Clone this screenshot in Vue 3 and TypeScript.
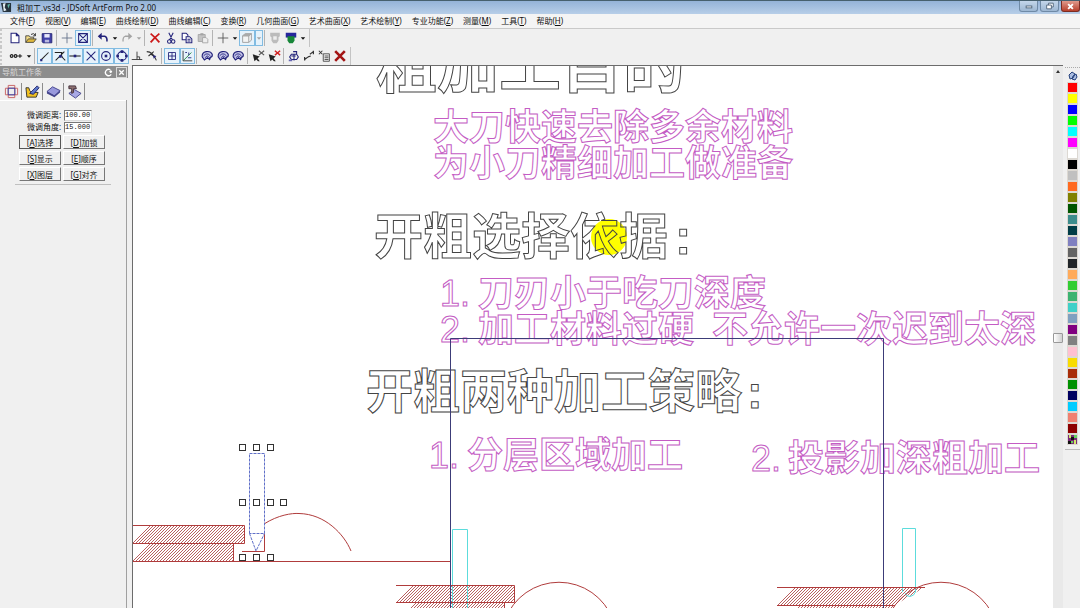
<script setup lang="ts">
interface Shape { d: string; s?: string; f?: string; w?: number }
interface Tool { icon: string; label: string; on?: boolean; narrow?: boolean }
interface Group { width: number; tools: Tool[] }
interface Row { name: string; groups: Group[] }

const navy = '#23237a'
const grey = '#a4a4a4'
const blob: Shape[] = [
  { d: 'M2.500 9 Q2 4 7 3 Q12 2 14 6 Q14.500 9 12 9.500 L11 12 L8.500 10 L5 12.500 Z', f: '#c6c6ea', s: navy, w: 1.300 },
  { d: 'M4 8 Q8 3 12 8 M6 10 Q8 6 11 10', s: navy },
]

const icons: Record<string, Shape[]> = {
  new: [{ d: 'M3.500 2.500 H9.500 L12.500 5.500 V13.500 H3.500 Z M9.500 2.500 V5.500 H12.500', f: '#fff', s: navy, w: 1.200 }],
  open: [
    { d: 'M2 13 V5.500 H6 L7 7 H11 V9', f: '#f3dc86', s: '#444' },
    { d: 'M2 13 L5 9 H14 L11 13 Z', f: '#e0b93c', s: '#444' },
    { d: 'M8 4 Q11 1.500 13 5 M13 2.500 V5.500 H10.500', s: '#222' },
  ],
  save: [
    { d: 'M2.500 3 H13.500 V13.500 H3.500 L2.500 12.500 Z', f: '#4040a8', s: '#202070' },
    { d: 'M5 3.500 H11 V7.500 H5 Z', f: '#e8e8fa' },
    { d: 'M5.500 10 H10.500 V13 H5.500 Z', f: '#b9b9e0' },
  ],
  cross: [{ d: 'M8 2 V14 M2 8 H14', s: '#62718a' }],
  fit: [{ d: 'M3 3 H13 V13 H3 Z M3 3 L13 13 M13 3 L3 13', s: navy, w: 1.200 }],
  undo: [{ d: 'M4 6 H10 Q13 7 12.500 12', s: navy, w: 1.800 }, { d: 'M2 6 L6.500 2 V10 Z', f: navy }],
  redo: [{ d: 'M12 6 H6 Q3 7 3.500 12', s: grey, w: 1.500 }, { d: 'M14 6 L9.500 2 V10 Z', f: grey }],
  arrow: [{ d: 'M5.500 7 H10.500 L8 10 Z', f: '#111' }],
  arrowOff: [{ d: 'M5.500 7 H10.500 L8 10 Z', f: grey }],
  remove: [{ d: 'M3 3 Q8 7 13 13 M13 3 Q8 7 3 13', s: '#cc1818', w: 2 }],
  cut: [{ d: 'M5.500 2 L9.500 10 M10.500 2 L6.500 10 M4 12 A2 2 0 1 0 8 12 A2 2 0 1 0 4 12 M8.500 12 A2 2 0 1 0 12.500 12 A2 2 0 1 0 8.500 12', s: navy, w: 1.200 }],
  copy: [
    { d: 'M2.500 2.500 H7 L9 4.500 V10 H2.500 Z', f: '#fff', s: navy, w: 1.200 },
    { d: 'M7 6.500 H11 L13.500 9 V13.500 H7 Z M8.500 9.500 H12 M8.500 11.500 H12', f: '#fff', s: navy, w: 1.200 },
  ],
  paste: [
    { d: 'M2.500 4 H10.500 V12 H2.500 Z', f: '#c3c3c3', s: grey },
    { d: 'M5 2.500 H8.500 V5 H5 Z', f: grey },
    { d: 'M7.500 7.500 H11.500 L13.500 9.500 V13.500 H7.500 Z', f: '#eee', s: grey },
  ],
  plus: [{ d: 'M8 2 V14 M2 8 H14', s: '#555' }],
  cube: [{ d: 'M3 5.500 H10 V13 H3 Z M3 5.500 L6 3 H13 V10.500 L10 13 M10 5.500 L13 3', s: '#9a9a9a', f: '#f4f4f4' }, { d: 'M3 5 L6 3 H13 L10.500 6 H3 Z', f: '#aaa' }],
  bulbOff: [{ d: 'M2.500 2 H13.500 V6 L12 7 V11 L10 14 H6 L4 11 V7 L2.500 6 Z', f: '#bcbcbc' }, { d: 'M6 6 H10 V10 H6 Z', f: '#eee' }],
  bulb: [{ d: 'M2 2 H14 V7.500 H2 Z', f: '#26269c' }, { d: 'M4 6 H12 V11 L10 14 H6 L4 11 Z', f: '#178638' }],
  nodes: [{ d: 'M1.500 8 A1.500 1.500 0 1 0 4.500 8 A1.500 1.500 0 1 0 1.500 8 M6 8 A1.500 1.500 0 1 0 9 8 A1.500 1.500 0 1 0 6 8 M9 8 H15 M12.500 6 V10', s: '#222', w: 1.400 }],
  line: [{ d: 'M3.500 12.500 L12 4', s: '#222', w: 1.200 }, { d: 'M2.500 11.500 H5 V14 H2.500 Z', f: navy }],
  tangent: [{ d: 'M2 4 H10 Q8 8 14 13 M3 13 L13 3', s: '#222', w: 1.200 }, { d: 'M7 7 H10 V10 H7 Z', f: navy }],
  mid: [{ d: 'M1.500 8 H14.500', s: '#222', w: 1.200 }, { d: 'M6.500 6.500 H9.500 V9.500 H6.500 Z', f: navy }],
  inter: [{ d: 'M3 3 L13 13 M13 3 L3 13', s: navy, w: 1.200 }],
  centre: [{ d: 'M3 8 A5 5 0 1 0 13 8 A5 5 0 1 0 3 8', s: navy, w: 1.200 }, { d: 'M6.500 6.500 H9.500 V9.500 H6.500 Z', f: navy }],
  quad: [{ d: 'M3 8 A5 5 0 1 0 13 8 A5 5 0 1 0 3 8', s: navy, w: 1.200 }, { d: 'M6.500 1.500 H9.500 V4.500 H6.500 Z M6.500 11.500 H9.500 V14.500 H6.500 Z M1.500 6.500 H4.500 V9.500 H1.500 Z M11.500 6.500 H14.500 V9.500 H11.500 Z', f: navy }],
  perp: [{ d: 'M8 3 V12 M2 12 H14 M8 9 H11 V12', s: '#333' }],
  curve: [{ d: 'M2 3 Q9 3 13 13 M4 8 L10 3 M7 6 L11 9', s: '#333', w: 1.200 }, { d: 'M9 7 L13 8 L10 11 Z', f: navy }],
  target: [{ d: 'M4 4 H12 V12 H4 Z M8 4 V12 M4 8 H12', s: navy }],
  axes: [{ d: 'M3.500 2 V13.500 H14', s: '#333' }, { d: 'M4 13 L13 4', s: '#1b7f3b' }, { d: 'M6 4 H8 M10 4 V7 M9 10 H13', s: navy }],
  fillA: blob,
  fillB: blob,
  fillC: blob,
  pickA: [{ d: 'M2 6 L10 8.500 L7.500 10.500 L10 14 L8 14 L6 12 L4 14 Z', f: '#222' }, { d: 'M9 2 L15 7 M15 2 L9 7', s: '#555', w: 1.200 }],
  pickB: [{ d: 'M2 6 L10 8.500 L7.500 10.500 L10 14 L8 14 L6 12 L4 14 Z', f: '#222' }, { d: 'M9 2 L15 7 M15 2 L9 7', s: '#d02020', w: 1.600 }],
  group: [{ d: 'M5 6 H11 L13 9 L11 12 H5 L3 9 Z M7 3 H11 V6 M5 8 H10 M8 6 V13', s: navy, w: 1.200 }, { d: 'M2 12 H6 V14 H2 Z', f: '#6868b4' }],
  link: [{ d: 'M3 12 L7 9 M9 6 L13 3 M3 9 V13 M13 2 V6 M7 9 L10 8', s: '#333', w: 1.400 }],
  list: [{ d: 'M6 5.500 H13 V14 H6 Z M7.500 8 H12 M7.500 10 H12 M7.500 12 H12', s: '#444' }, { d: 'M1 2 L5 6 M5 2 L1 6', s: '#333', w: 1.200 }],
  close: [{ d: 'M2.500 2.500 L13.500 13.500 M13.500 2.500 L2.500 13.500', s: '#a31515', w: 3 }],
}

const rows: Row[] = [
  {
    name: '标准',
    groups: [
      { width: 48, tools: [{ icon: 'new', label: '新建' }, { icon: 'open', label: '打开' }, { icon: 'save', label: '保存' }] },
      { width: 32, tools: [{ icon: 'cross', label: '定位' }, { icon: 'fit', label: '全部显示', on: true }] },
      { width: 48, tools: [{ icon: 'undo', label: '撤销' }, { icon: 'arrow', label: '撤销列表', narrow: true }, { icon: 'redo', label: '重做' }, { icon: 'arrowOff', label: '重做列表', narrow: true }] },
      { width: 64, tools: [{ icon: 'remove', label: '删除' }, { icon: 'cut', label: '剪切' }, { icon: 'copy', label: '复制' }, { icon: 'paste', label: '粘贴' }] },
      { width: 48, tools: [{ icon: 'plus', label: '坐标' }, { icon: 'arrow', label: '坐标列表', narrow: true }, { icon: 'cube', label: '视图', on: true }, { icon: 'arrowOff', label: '视图列表', narrow: true, on: true }] },
      { width: 40, tools: [{ icon: 'bulbOff', label: '渲染' }, { icon: 'bulb', label: '着色' }, { icon: 'arrow', label: '更多', narrow: true }] },
    ],
  },
  {
    name: '捕捉',
    groups: [
      { width: 26, tools: [{ icon: 'nodes', label: '节点' }, { icon: 'arrow', label: '节点列表', narrow: true }] },
      { width: 123, tools: [
        { icon: 'line', label: '端点', on: true }, { icon: 'tangent', label: '切点', on: true }, { icon: 'mid', label: '中点', on: true }, { icon: 'inter', label: '交点', on: true },
        { icon: 'centre', label: '圆心', on: true }, { icon: 'quad', label: '象限点', on: true }, { icon: 'perp', label: '垂足' }, { icon: 'curve', label: '最近点' },
      ] },
      { width: 31, tools: [{ icon: 'target', label: '栅格', on: true }, { icon: 'axes', label: '坐标轴', on: true }] },
      { width: 47, tools: [{ icon: 'fillA', label: '曲面一' }, { icon: 'fillB', label: '曲面二' }, { icon: 'fillC', label: '曲面三' }] },
      { width: 32, tools: [{ icon: 'pickA', label: '拾取' }, { icon: 'pickB', label: '取消拾取' }] },
      { width: 62, tools: [{ icon: 'group', label: '组合' }, { icon: 'link', label: '连接' }, { icon: 'list', label: '属性' }, { icon: 'close', label: '关闭' }] },
    ],
  },
]

const menus: [string, string][] = [
  ['文件', 'F'], ['视图', 'V'], ['编辑', 'E'], ['曲线绘制', 'D'], ['曲线编辑', 'C'], ['变换', 'R'], ['几何曲面', 'G'],
  ['艺术曲面', 'X'], ['艺术绘制', 'Y'], ['专业功能', 'Z'], ['测量', 'M'], ['工具', 'T'], ['帮助', 'H'],
]

const commands: [string, string][] = [['A', '选择'], ['D', '加锁'], ['S', '显示'], ['E', '顺序'], ['X', '图层'], ['G', '对齐']]

const swatches = [
  '#ff0000', '#ffff00', '#0000ff', '#00ff00', '#00ffff', '#ff00ff', '#ffffff', '#000000', '#c0c0c0', '#ff6a20', '#808000',
  '#005500', '#3c8c8c', '#003c46', '#8080c0', '#646464', '#202428', '#ffaa5a', '#32cd32', '#3cb371', '#40d0c8', '#7fa0c0',
  '#800080', '#808080', '#ffc0d0', '#f8dc00', '#a82c08', '#009000', '#000060', '#00ccff', '#f08070', '#8c0000',
]

function hatch(left: number, right: number, top: number, bottom: number): string {
  const run = bottom - top
  let d = ''
  for (let x = left; x < right; x += 3) {
    const over = Math.max(0, x + run - right)
    d += `M${x} ${bottom}L${x + run - over} ${top + over}`
  }
  return d
}

const handles: [number, number][] = [
  [242, 447], [256, 447], [270, 447],
  [242, 502], [256, 502], [270, 502], [283, 502],
  [242, 557], [256, 557], [270, 557],
]
</script>

<template>
  <div class="app">
    <header class="titlebar">
      <svg class="logo" viewBox="0 0 12 12" aria-hidden="true">
        <path d="M0 1H11V11H2Z" fill="#26333d" />
        <path d="M2 2L5 1L4 6L6 9L3 10Z" fill="#e4eef2" />
        <path d="M7 3L10 2L8 7Z" fill="#5fb6a6" />
      </svg>
      <h1>粗加工.vs3d - JDSoft ArtForm Pro 2.00</h1>
      <div class="window-buttons">
        <button type="button" aria-label="最小化"><svg viewBox="0 0 18 10"><rect x="6.500" y="5" width="6" height="2" fill="#fff" stroke="#55697e" /></svg></button>
        <button type="button" aria-label="还原"><svg viewBox="0 0 18 10"><path d="M8 2H13V6H8Z" fill="#fff" stroke="#55697e" /><path d="M6 4H11V8H6Z" fill="#fff" stroke="#55697e" /></svg></button>
        <button type="button" class="quit" aria-label="关闭窗口"><svg viewBox="0 0 18 10"><path d="M6.500 3L11.500 8M11.500 3L6.500 8" stroke="#fff" stroke-width="2" /></svg></button>
      </div>
    </header>

    <nav class="menubar">
      <button v-for="[name, key] in menus" :key="name" type="button">{{ name }}(<u>{{ key }}</u>)</button>
    </nav>

    <div class="toolbars">
      <div v-for="row in rows" :key="row.name" class="toolbar" role="toolbar" :aria-label="row.name">
        <div v-for="(group, i) in row.groups" :key="i" class="group" :style="{ width: group.width + 'px' }">
          <button v-for="tool in group.tools" :key="tool.label" type="button" :class="{ on: tool.on, narrow: tool.narrow }" :aria-label="tool.label">
            <svg viewBox="0 0 16 16">
              <path v-for="(p, k) in icons[tool.icon]" :key="k" :d="p.d" :fill="p.f ?? 'none'" :stroke="p.s ?? 'none'" :stroke-width="p.w ?? 1" />
            </svg>
          </button>
        </div>
      </div>
    </div>

    <div class="work">
      <aside class="panel">
        <div class="panel-title">
          <h2>导航工作条</h2>
          <button type="button" aria-label="固定"><svg viewBox="0 0 10 10"><path d="M7 2A3.500 3.500 0 1 0 8 7M6 4H9M7.500 2.500V5.500" fill="none" stroke="#fff" stroke-width="1.500" /></svg></button>
          <button type="button" class="boxed" aria-label="关闭面板"><svg viewBox="0 0 10 10"><path d="M2.500 2.500L7.500 7.500M7.500 2.500L2.500 7.500" stroke="#fff" stroke-width="1.500" /></svg></button>
        </div>
        <div class="tabs">
          <button type="button" aria-label="选择"><svg viewBox="0 0 16 16"><path d="M4.500 1.500H11.500V14.500H4.500Z" fill="none" stroke="#c86060" /><path d="M1.500 4.500H14.500V11.500H1.500Z" fill="none" stroke="#c86060" /><path d="M4.500 4.500H11.500V11.500H4.500Z" fill="#eee" stroke="#2a2a90" /></svg></button>
          <button type="button" aria-label="绘制"><svg viewBox="0 0 16 16"><path d="M1 4H4L5 7L7 9H14L12 14H2Z" fill="#f0c020" stroke="#333" /><path d="M5 10L13 2L15 4L9 11Z" fill="#5c78cc" stroke="#222266" /></svg></button>
          <button type="button" aria-label="曲面"><svg viewBox="0 0 16 16"><path d="M1 8L7 3L15 7L9 13Z" fill="#9898dc" stroke="#44448c" /><path d="M1 8L9 12L15 7V9L9 14L1 10Z" fill="#44448c" /></svg></button>
          <button type="button" aria-label="加工"><svg viewBox="0 0 16 16"><path d="M2 10L8 6L15 10L9 15Z" fill="#a8a8e4" stroke="#44448c" /><path d="M2 2H9L10 5H7V9L5 10V5H2Z" fill="#8c7070" stroke="#44303c" /></svg></button>
        </div>
        <div class="panel-body">
          <form @submit.prevent>
            <div class="field"><label for="step">微调距离:</label><input id="step" type="text" value="100.00" /></div>
            <div class="field"><label for="angle">微调角度:</label><input id="angle" type="text" value="15.000" /></div>
            <div class="commands">
              <button v-for="[key, name] in commands" :key="key" type="button">[<u>{{ key }}</u>]{{ name }}</button>
            </div>
          </form>
        </div>
      </aside>

      <main class="canvas">
        <svg role="img" aria-label="绘图区">
          <defs>
            <clipPath id="slope">
              <path d="M770 580H935L925 587L895 605L880 620H770Z" />
            </clipPath>
          </defs>
          <g transform="translate(-133 -66)">
            <circle cx="609" cy="237" r="18" fill="#ffff00" />

            <g class="ink">
              <text class="xl" x="375" y="88">粗加工目的</text>
              <text class="lg" x="374" y="254">开粗选择依据<tspan x="675">:</tspan></text>
              <text class="md" x="366" y="408">开粗两种加工策略<tspan x="747">:</tspan></text>
            </g>
            <g class="note">
              <text x="433" y="140">大刀快速去除多余材料</text>
              <text x="433" y="176">为小刀精细加工做准备</text>
              <text x="440" y="306"><tspan class="num">1.</tspan><tspan x="478">刀刃小于吃刀深度</tspan></text>
              <text x="440" y="342"><tspan class="num">2.</tspan><tspan x="478">加工材料过硬</tspan><tspan x="712">不允许一次迟到太深</tspan></text>
              <text x="429" y="468"><tspan class="num">1.</tspan><tspan x="467">分层区域加工</tspan></text>
              <text x="751" y="471"><tspan class="num">2.</tspan><tspan x="788">投影加深粗加工</tspan></text>
            </g>

            <g class="hatch">
              <path :d="hatch(133, 244, 525, 543)" />
              <path :d="hatch(133, 233, 543, 561)" />
              <path :d="hatch(397, 515, 585, 602)" />
              <path :d="hatch(400, 504, 602, 619)" />
              <g clip-path="url(#slope)">
                <path :d="hatch(778, 925, 587, 605)" />
                <path :d="hatch(783, 895, 605, 623)" />
              </g>
            </g>

            <g class="cyan">
              <path d="M452.500 620V529.500H467.500V620" />
              <path d="M902.500 592V528.500H915.500V592Q914 596 910 596.500Q906 596.500 905 593" />
            </g>

            <g class="red">
              <path d="M132 525.500H244.500V543.500H132M233.500 543.500V561.500M132 561.500H450" />
              <path d="M242 551.500H264.500V533.500M264 524C278 515 292 513 299 513.500C325 514 344 534 351 551" />
              <path d="M396 585.500H514.500V602.500H396M504.500 602.500V620" />
              <path d="M505 620A57.500 57.500 0 0 1 613 620" />
              <path d="M777 587.500H925M777 605.500H895M887 620A57.500 57.500 0 0 1 995 620" />
            </g>

            <path class="frame" d="M450.500 620V338.500H883.500V620" />

            <path class="pen" d="M249.500 533.500V453.500H264.500V533.500ZL256 551L264.500 533.500" />
            <rect v-for="[x, y] in handles" :key="x + '-' + y" class="handle" :x="x - 3 + 0.5" :y="y - 3 + 0.5" width="6" height="6" />
          </g>
        </svg>
      </main>

      <div class="scroll" aria-hidden="true">
        <span class="up"></span>
        <span class="thumb"></span>
      </div>

      <aside class="palette">
        <div class="palette-list">
          <button type="button" class="pick" aria-label="取色">
            <svg viewBox="0 0 10 10"><path d="M1 4L4 1L7 3L5 7L2 8ZM5 5L8 3L9 6L7 9L4 8Z" fill="#a9bce0" stroke="#24407c" /></svg>
          </button>
          <button v-for="c in swatches" :key="c" type="button" class="swatch" :style="{ background: c }" :aria-label="c"></button>
          <button type="button" class="swatch" aria-label="更多颜色">
            <svg viewBox="0 0 9 9"><rect width="9" height="9" fill="#7a2a7a" /><path d="M1 0H3V3H1ZM6 5H8V9H6Z" fill="#cfe86c" /><path d="M3 2H6V5H3ZM0 6H3V9H0Z" fill="#111" /><path d="M6 0H9V3H6ZM3 6H5V8H3Z" fill="#66d060" /></svg>
          </button>
        </div>
      </aside>
    </div>
  </div>
</template>

<style>
html,
body {
  margin: 0;
  overflow: hidden;
}
</style>

<style scoped>
.app {
  display: flex;
  flex-direction: column;
  height: 100vh;
  background: #f0f0f0;
  color: #111;
  font: 8px/12px "Noto Sans", "Noto Sans CJK SC", sans-serif;
}
button {
  margin: 0;
  padding: 0;
  border: 0;
  background: none;
  color: inherit;
  font: inherit;
}
h1,
h2 {
  margin: 0;
  font: inherit;
}
svg {
  display: block;
}
.titlebar {
  display: flex;
  align-items: center;
  height: 13px;
  border-top: 1px solid #46606e;
  background: linear-gradient(#94b3d8, #b7cee8);
}
.logo {
  width: 11px;
  height: 11px;
  margin: 0 5px 0 1px;
}
.titlebar h1 {
  flex: 1;
}
.window-buttons {
  display: flex;
  gap: 2px;
  align-self: flex-start;
}
.window-buttons button {
  width: 19px;
  height: 11px;
  border: 1px solid #6f8aa6;
  border-top: 0;
  border-radius: 0 0 3px 3px;
  background: linear-gradient(#c3d6ea, #9db7d2);
}
.window-buttons svg {
  width: 100%;
  height: 10px;
}
.window-buttons .quit {
  border-color: #7c2c22;
  background: linear-gradient(#e09a8c, #b8402c);
}
.menubar {
  display: flex;
  gap: 10px;
  padding: 0 10px;
  height: 14px;
  background: #f4f4f4;
  border-bottom: 1px solid #c9c9c9;
}
.toolbars {
  display: flex;
  flex-direction: column;
  align-items: flex-start;
  height: 36px;
}
.toolbar {
  display: flex;
  height: 18px;
  padding: 1px 1px 1px 5px;
  box-sizing: border-box;
  border-right: 1px solid #c4c4c4;
  border-left: 2px dotted #c8c8c8;
}
.group {
  display: flex;
  margin-left: 2px;
  padding-right: 1px;
  border-right: 1px solid #b4b4b4;
}
.group:first-child {
  margin-left: 0;
}
.group:last-child {
  border-right: 0;
}
.group button {
  flex: 2;
  min-width: 0;
  display: flex;
  align-items: center;
  justify-content: center;
  overflow: hidden;
}
.group button.narrow {
  flex: 1;
}
.group button.on {
  box-shadow: inset 0 0 0 1px #82bce2;
  background: #e6f2fb;
}
.group svg {
  flex: none;
  width: 14px;
  height: 14px;
}
.work {
  flex: 1;
  min-height: 0;
  display: flex;
}
.panel {
  width: 132px;
  box-sizing: border-box;
  padding-right: 4px;
  display: flex;
  flex-direction: column;
}
.panel-title {
  display: flex;
  align-items: center;
  gap: 3px;
  height: 12px;
  margin-top: 1px;
  padding: 0 1px 0 2px;
  background: #8d8d8d;
  color: #d8d8d8;
}
.panel-title h2 {
  flex: 1;
}
.panel-title svg {
  width: 9px;
  height: 9px;
}
.panel-title .boxed {
  border: 1px solid #d8d8d8;
}
.tabs {
  display: flex;
  margin-top: 5px;
  padding-left: 1px;
}
.tabs button {
  width: 21px;
  height: 17px;
  display: flex;
  align-items: center;
  justify-content: center;
  border-right: 1px solid #8c8c8c;
}
.tabs svg {
  width: 15px;
  height: 15px;
}
.panel-body {
  flex: 1;
  border: solid #a0a0a0;
  border-width: 0 1px 0 0;
  box-shadow: inset 0 1px #fff;
  margin-right: 1px;
  padding: 9px 15px 0;
}
.panel form {
  padding-bottom: 3px;
  border-bottom: 1px solid #c0c0c0;
}
.field {
  display: flex;
  align-items: center;
  gap: 3px;
  height: 12px;
  padding-left: 12px;
}
.field label {
  width: 34px;
  white-space: nowrap;
}
.field input {
  width: 28px;
  height: 11px;
  box-sizing: border-box;
  padding: 0;
  border: 1px solid #777;
  border-right-color: #ddd;
  border-bottom-color: #ddd;
  border-radius: 0;
  background: #fff;
  color: #111;
  font: 7px/9px "Liberation Mono", monospace;
}
.commands {
  display: grid;
  grid-template-columns: 42px 42px;
  grid-auto-rows: 14px;
  gap: 2px;
  margin-top: 2px;
  padding-left: 4px;
}
.commands button {
  border: 1px solid #fff;
  border-right-color: #777;
  border-bottom-color: #777;
  line-height: 11px;
}
.commands button:first-child {
  border-color: #555;
}
.canvas {
  flex: 1;
  min-width: 0;
  box-sizing: border-box;
  border-top: 1px solid #6c6c6c;
  border-left: 1px solid #6c6c6c;
  background: #fff;
  overflow: hidden;
}
.canvas svg {
  width: 100%;
  height: 100%;
}
.canvas text {
  fill: none;
  stroke-width: 1;
  font-family: "Liberation Sans", "Noto Sans CJK SC", sans-serif;
  font-weight: 700;
}
.ink text {
  stroke: #444;
}
.xl {
  font-size: 62px;
}
.lg {
  font-size: 49px;
}
.md {
  font-size: 47px;
}
.note text {
  stroke: #c45cc4;
  font-size: 36px;
}
.note .num {
  font-weight: 400;
}
.hatch path,
.red path,
.cyan path,
.frame,
.pen {
  fill: none;
}
.hatch path {
  stroke: #b86060;
}
.red path {
  stroke: #b03c3c;
}
.cyan path {
  stroke: #5cdcdc;
}
.frame {
  stroke: #3c3c78;
}
.pen {
  stroke: #6070c8;
  stroke-dasharray: 3 1;
}
.handle {
  fill: #fff;
  stroke: #333;
}
.scroll {
  width: 10px;
  display: flex;
  flex-direction: column;
  align-items: center;
  border-top: 1px solid #6c6c6c;
  background: #e9e9e9;
}
.up {
  margin-top: 4px;
  border: 2px solid transparent;
  border-top: 0;
  border-bottom: 3px solid #333;
}
.thumb {
  width: 8px;
  height: 8px;
  margin-top: 260px;
  border: 1px solid #999;
  border-radius: 1px;
  background: linear-gradient(90deg, #fff, #d0d0d0);
}
.palette {
  width: 17px;
  padding-top: 2px;
  box-sizing: border-box;
}
.palette-list {
  display: flex;
  flex-direction: column;
  align-items: center;
  gap: 2px;
  margin-left: 2px;
  padding: 3px 0 5px;
  border-top: 1px dotted #aaa;
  border-bottom: 1px solid #bbb;
}
.pick svg {
  width: 10px;
  height: 10px;
}
.swatch {
  width: 9px;
  height: 9px;
  box-shadow: 0 0 0 1px #dcd8d2;
}
.swatch svg {
  width: 100%;
  height: 100%;
}
</style>
